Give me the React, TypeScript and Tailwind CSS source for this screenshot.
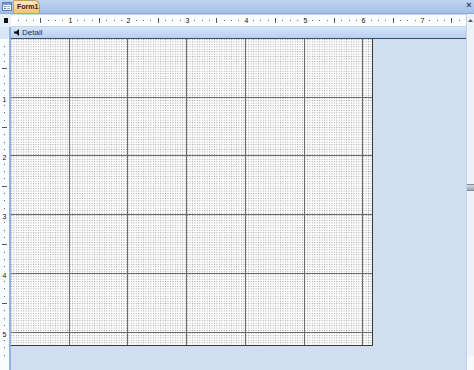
import React from "react";

const INCH = 58.7;

function HRuler() {
  const ticks = [];
  for (let i = 1; i < 62; i++) {
    const x = Math.round(i * (INCH / 8)) + 0.5;
    if (i % 8 === 0) {
      ticks.push(
        <text key={i} x={x} y={9} fontSize="7" textAnchor="middle" fill="#111" fontFamily="Liberation Sans, sans-serif">
          {i / 8}
        </text>
      );
    } else if (i % 4 === 0) {
      ticks.push(<line key={i} x1={x} x2={x} y1={4} y2={9} stroke="#555" strokeWidth="1" />);
    } else {
      ticks.push(<rect key={i} x={x - 0.5} y={6} width={1} height={1} fill="#666" />);
    }
  }
  return (
    <svg width="455" height="13" className="block">
      <rect x="0" y="0" width="455" height="13" fill="#fdfeff" />
      <line x1="0" x2="455" y1="0.5" y2="0.5" stroke="#c7d5ea" />
      <line x1="0" x2="455" y1="12.5" y2="12.5" stroke="#c7d5ea" />
      {ticks}
    </svg>
  );
}

function VRuler() {
  const ticks = [];
  const off = 12;
  for (let i = 1; i < 44; i++) {
    const y = off + Math.round(i * (INCH / 8)) + 0.5;
    if (i % 8 === 0) {
      ticks.push(
        <text key={i} x={4.5} y={y + 3} fontSize="7" textAnchor="middle" fill="#111" fontFamily="Liberation Sans, sans-serif">
          {i / 8}
        </text>
      );
    } else if (i % 4 === 0) {
      ticks.push(<line key={i} x1={2} x2={7} y1={y} y2={y} stroke="#555" />);
    } else {
      ticks.push(<rect key={i} x={4} y={y - 0.5} width={1} height={1} fill="#666" />);
    }
  }
  return (
    <svg width="9" height="343" className="block">
      <rect x="0" y="0" width="9" height="343" fill="#fbfcfe" />
      <rect x="0" y="0" width="9" height="12" fill="#dbe6f5" />
      {ticks}
    </svg>
  );
}

function Grid() {
  const w = 362;
  const h = 307;
  const step = INCH / 24;
  const vlines = [1, 2, 3, 4, 5, 6].map((n) => Math.round(n * INCH) - 0.5);
  const hlines = [1, 2, 3, 4, 5].map((n) => Math.round(n * INCH) - 0.5);
  return (
    <svg width={w} height={h} className="block">
      <defs>
        <pattern id="dots" width={step} height={step} patternUnits="userSpaceOnUse">
          <rect x="0" y="0" width="1" height="1" fill="#9c9c9c" />
        </pattern>
      </defs>
      <rect x="0" y="0" width={w} height={h} fill="#ffffff" />
      <rect x="0" y="0" width={w} height={h} fill="url(#dots)" />
      {vlines.map((x) => (
        <line key={x} x1={x} x2={x} y1={0} y2={h} stroke="#6b6b6b" />
      ))}
      {hlines.map((y) => (
        <line key={y} x1={0} x2={w} y1={y} y2={y} stroke="#6b6b6b" />
      ))}
      <line x1={w - 0.5} x2={w - 0.5} y1={0} y2={h} stroke="#3a3a3a" />
      <line x1={0} x2={w} y1={h - 0.5} y2={h - 0.5} stroke="#3a3a3a" />
    </svg>
  );
}

export default function App() {
  return (
    <div className="w-[474px] h-[370px] overflow-hidden flex flex-col bg-[#d1deef] font-['Liberation_Sans',sans-serif]">
      {/* document tab strip */}
      <div className="h-[14px] flex items-end bg-gradient-to-b from-[#bfd4f0] to-[#a5c1e7] border-b border-[#8eabd6]">
        <div className="w-[13px] h-[13px] flex items-center justify-center">
          <svg width="10" height="9">
            <rect x="0.5" y="0.5" width="9" height="8" fill="#fff" stroke="#5a7db0" />
            <rect x="1" y="1" width="8" height="2" fill="#7d9fd0" />
            <rect x="2" y="4" width="2" height="1" fill="#5a7db0" />
            <rect x="2" y="6" width="2" height="1" fill="#5a7db0" />
            <rect x="5" y="4" width="3" height="1" fill="#9bb3d6" />
            <rect x="5" y="6" width="3" height="1" fill="#9bb3d6" />
          </svg>
        </div>
        <div className="h-[13px] w-[27px] pl-[3px] rounded-tl-[2px] rounded-tr-[6px] bg-gradient-to-b from-[#fde8c0] to-[#f5c272] border border-b-0 border-[#c99b58] text-[7px] leading-[12px] font-bold text-[#2e2210]">
          Form1
        </div>
        <div className="flex-1" />
        <div className="w-[10px] h-[13px] text-[9px] leading-[10px] font-bold text-[#1d3d6e] text-center">×</div>
      </div>

      <div className="flex flex-1 min-h-0">
        <div className="flex-1 flex flex-col min-w-0">
          {/* horizontal ruler */}
          <div className="h-[13px] flex">
            <div className="w-[11px] h-[13px] flex items-center justify-center bg-[#e6eef8]">
              <div className="w-[4px] h-[5px] bg-[#111]" />
            </div>
            <HRuler />
          </div>

          <div className="flex flex-1 min-h-0">
            <VRuler />
            <div className="w-[2px] bg-[#94b2dd]" />
            <div className="flex-1 flex flex-col min-w-0">
              {/* Detail section header */}
              <div className="h-[12px] flex items-center gap-[2px] pl-[3px] bg-gradient-to-b from-[#d6e5f9] to-[#b7cff1] border-b border-[#3d4d63] text-[8px] text-[#1c2f4d]">
                <svg width="6" height="7">
                  <path d="M5 0 L1 3.5 L5 7 Z" fill="#111" />
                  <rect x="0" y="2.5" width="2" height="2" fill="#111" />
                </svg>
                <span className="leading-[10px]">Detail</span>
              </div>
              <Grid />
            </div>
          </div>
        </div>

        {/* vertical scrollbar */}
        <div className="w-[8px] flex flex-col bg-[#eef3f9] border-l border-[#c3d1e4]">
          <div className="h-[13px] flex items-center justify-center">
            <svg width="5" height="3">
              <path d="M0 3 L2.5 0 L5 3 Z" fill="#555" />
            </svg>
          </div>
          <div className="flex-1 flex flex-col">
            <div className="h-[157px]" />
            <div className="h-[7px] bg-gradient-to-b from-[#d4d9df] to-[#9ea8b4] border-y border-[#7f8a98]" />
            <div className="flex-1" />
          </div>
          <div className="h-[14px] bg-[#f7f9fc]" />
        </div>
      </div>
    </div>
  );
}
